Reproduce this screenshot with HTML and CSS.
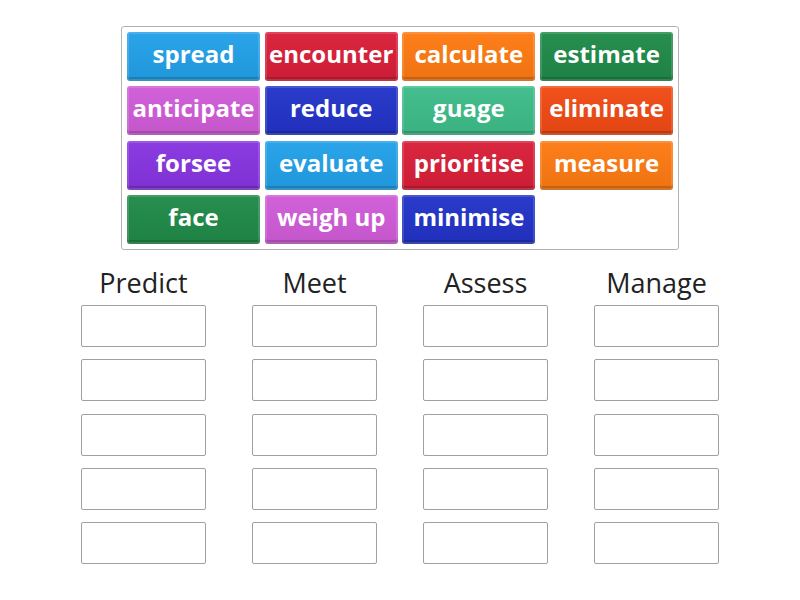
FILE: index.html
```html
<!DOCTYPE html>
<html>
<head>
<meta charset="utf-8">
<link rel="stylesheet" href="styles.css">
</head>
<body>
<div class="page">
  <div class="bank">
    <div class="tile blue">spread</div>
    <div class="tile red">encounter</div>
    <div class="tile orange">calculate</div>
    <div class="tile green">estimate</div>
    <div class="tile pink">anticipate</div>
    <div class="tile navy">reduce</div>
    <div class="tile teal">guage</div>
    <div class="tile flame">eliminate</div>
    <div class="tile purple">forsee</div>
    <div class="tile blue">evaluate</div>
    <div class="tile red">prioritise</div>
    <div class="tile orange">measure</div>
    <div class="tile green">face</div>
    <div class="tile pink">weigh up</div>
    <div class="tile navy">minimise</div>
  </div>
  <div class="groups">
    <div class="group">
      <div class="heading">Predict</div>
      <div class="slot"></div><div class="slot"></div><div class="slot"></div><div class="slot"></div><div class="slot"></div>
    </div>
    <div class="group">
      <div class="heading">Meet</div>
      <div class="slot"></div><div class="slot"></div><div class="slot"></div><div class="slot"></div><div class="slot"></div>
    </div>
    <div class="group">
      <div class="heading">Assess</div>
      <div class="slot"></div><div class="slot"></div><div class="slot"></div><div class="slot"></div><div class="slot"></div>
    </div>
    <div class="group">
      <div class="heading">Manage</div>
      <div class="slot"></div><div class="slot"></div><div class="slot"></div><div class="slot"></div><div class="slot"></div>
    </div>
  </div>
</div>
</body>
</html>
```
FILE: styles.css
```css
html, body {
  margin: 0;
  padding: 0;
  background: #fff;
}
body {
  font-family: "Open Sans", "Noto Sans", sans-serif;
  width: 800px;
  height: 600px;
}
.page {
  display: flex;
  flex-direction: column;
  align-items: center;
  padding-top: 26px;
}
.bank {
  display: grid;
  grid-template-columns: repeat(4, 133px);
  grid-auto-rows: 49px;
  column-gap: 4.7px;
  row-gap: 5.33px;
  padding: 5px 5px 5px 5px;
  border: 1px solid #b3b3b3;
  border-radius: 3px;
  width: 558px;
  box-sizing: border-box;
}
.tile {
  box-sizing: border-box;
  height: 49px;
  padding-top: 6px;
  line-height: 32px;
  font-size: 24px;
  font-weight: 700;
  color: #fff;
  text-align: center;
  white-space: nowrap;
  border-radius: 3px;
  box-shadow: inset 0 0 0 2px rgba(255,255,255,0.14), inset 0 -4px 0 rgba(0,0,0,0.16);
  background-image: linear-gradient(to bottom, rgba(255,255,255,0.04), rgba(0,0,0,0.06));
}
.blue { background-color: #22a0e8; }
.red { background-color: #d91e38; }
.orange { background-color: #fd7a12; }
.green { background-color: #1f8a48; }
.pink { background-color: #d05bd8; }
.navy { background-color: #2233c8; }
.teal { background-color: #3dbc88; }
.flame { background-color: #f04a14; }
.purple { background-color: #8734e0; }

.groups {
  display: flex;
  gap: 46px;
  margin-top: 15px;
}
.group {
  width: 125px;
  display: flex;
  flex-direction: column;
  gap: 12.33px;
}
.heading {
  font-size: 27px;
  line-height: 36px;
  color: #222;
  text-align: center;
  white-space: nowrap;
  margin-bottom: -8.33px;
}
.slot {
  box-sizing: border-box;
  height: 42px;
  border: 1px solid #a0a0a0;
  border-radius: 2px;
  background: #fff;
}
```
